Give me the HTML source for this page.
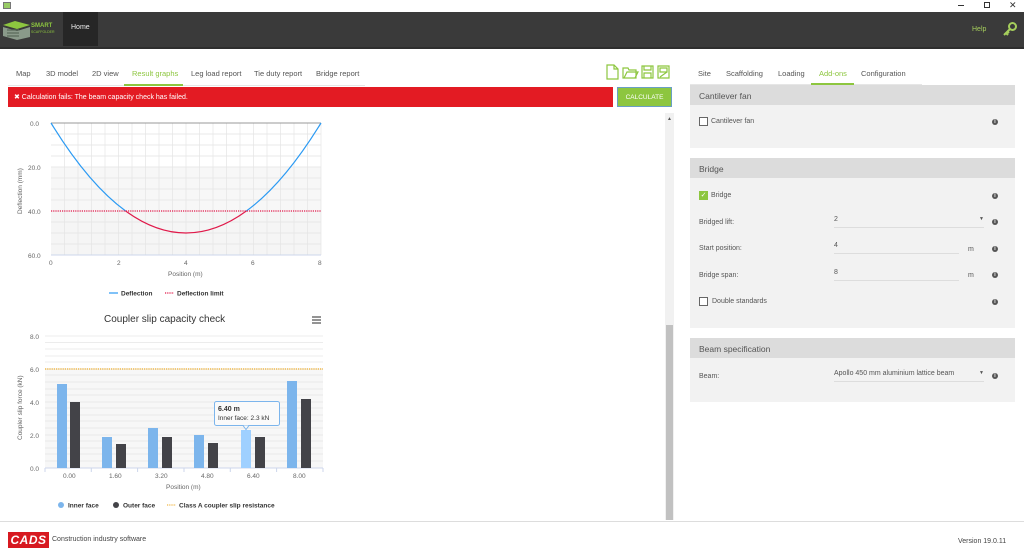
<!DOCTYPE html>
<html><head><meta charset="utf-8"><style>
*{margin:0;padding:0;box-sizing:border-box}
body{width:1024px;height:555px;position:relative;overflow:hidden;background:#fff;font-family:"Liberation Sans",sans-serif;font-size:8px;color:#555}
.a{position:absolute}
.tab{position:absolute;top:69px;font-size:7.5px;color:#555}
.ph{position:absolute;left:690px;width:325px;height:20px;background:#dcdcdc;font-size:8.5px;color:#555;padding:6px 0 0 9px}
.pb{position:absolute;left:690px;width:325px;background:#f2f2f2}
.lbl{position:absolute;font-size:7px;color:#555}
.info{position:absolute;width:6px;height:6px;border-radius:50%;background:#555;color:#fff;font-size:5px;font-weight:bold;line-height:6px;text-align:center}
.inp{position:absolute;border-bottom:1px solid #ddd;font-size:7px;color:#555;height:12px}
.cb{position:absolute;width:9px;height:9px;border:1px solid #666;background:#fff}
</style></head><body>
<div class="a" style="left:3px;top:2px;width:8px;height:7px;background:#9c6;border:1px solid #777"></div>
<div class="a" style="left:958px;top:5px;width:6px;height:1px;background:#333"></div>
<div class="a" style="left:984px;top:2px;width:6px;height:6px;border:1px solid #333"></div>
<div class="a" style="left:1009px;top:0px;font-size:9px;color:#333">✕</div>
<div class="a" style="left:0;top:12px;width:1024px;height:37px;background:#3a3a3a;border-bottom:2px solid #2e2e2e"></div>
<svg class="a" style="left:2px;top:18px" width="30" height="22" viewBox="0 0 30 22"><path d="M1 7 L13 3 L28 7 L15 11z" fill="#8dc63f"/><path d="M1 9 L15 13 L28 9 V19 L15 22 L1 18z" fill="#8a9a8a"/><path d="M5 12h12M5 15h12M5 18h12" stroke="#5a6a5a" stroke-width="1.2"/></svg>
<div class="a" style="left:31px;top:23px;font-size:6px;font-weight:bold;color:#8dc63f">SMART</div>
<div class="a" style="left:31px;top:30px;font-size:3.5px;color:#8dc63f">SCAFFOLDER</div>
<div class="a" style="left:63px;top:12px;width:35px;height:34px;background:#262626;color:#eee;font-size:7px;padding:12px 0 0 8px">Home</div>
<div class="a" style="left:972px;top:26px;font-size:7px;color:#a6cf5c">Help</div>
<svg class="a" style="left:1002px;top:21px" width="16" height="16" viewBox="0 0 16 16"><circle cx="10.5" cy="5.5" r="3.5" fill="none" stroke="#a6cf5c" stroke-width="2"/><path d="M8 8 L2 14 M4 12 L6 14 M5.5 10.5 L7 12" stroke="#a6cf5c" stroke-width="2"/></svg>

<div class="tab" style="left:16px">Map</div>
<div class="tab" style="left:46px">3D model</div>
<div class="tab" style="left:92px">2D view</div>
<div class="tab" style="left:132px;color:#8dc63f">Result graphs</div>
<div class="tab" style="left:191px">Leg load report</div>
<div class="tab" style="left:254px">Tie duty report</div>
<div class="tab" style="left:316px">Bridge report</div>
<div class="a" style="left:8px;top:85px;width:357px;height:1px;background:#e6e6e6"></div>
<div class="a" style="left:124px;top:84px;width:59px;height:2px;background:#8dc63f"></div>
<svg class="a" style="left:605px;top:64px" width="66" height="16" viewBox="0 0 66 16" fill="none" stroke="#8dc63f" stroke-width="1.2"><path d="M2 1h7l4 4v10H2z M9 1v4h4"/><path d="M18 4h5l1 2h7v8H18z M19 14l3-6h11l-3 6"/><path d="M37 2h11v12H37z M39 2v4h7V2 M39 9h7v5h-7z"/><path d="M53 2h11v12H53z M55 4h7v4h-7z M55 13l7-5"/></svg>
<div class="a" style="left:8px;top:87px;width:605px;height:20px;background:#e31b23;color:#fff;font-size:7px;padding:6px 0 0 6px">✖ Calculation fails: The beam capacity check has failed.</div>
<div class="a" style="left:617px;top:87px;width:55px;height:20px;background:#8dc63f;border:1px solid #6a9fc4;color:#fff;font-size:6.5px;text-align:center;padding-top:6px">CALCULATE</div>
<div class="a" style="left:665px;top:113px;width:9px;height:407px;background:#f1f1f1"></div>
<div class="a" style="left:666px;top:325px;width:7px;height:195px;background:#c1c1c1"></div>
<div class="a" style="left:667px;top:116px;font-size:5px;color:#555">▲</div>

<svg class="a" style="left:0;top:113px" width="340" height="195" viewBox="0 113 340 195" font-family="Liberation Sans" font-size="6.5" fill="#666">
<rect x="51" y="123" width="270" height="44" fill="#fff"/><rect x="51" y="167" width="270" height="44" fill="#f7f7f7"/><rect x="51" y="211" width="270" height="44" fill="#f5f5f5"/>
<g stroke="#e4e4e4" stroke-width="0.7">
<path d="M64.5 123V255M78 123V255M91.5 123V255M105 123V255M118.5 123V255M132 123V255M145.5 123V255M159 123V255M172.5 123V255M186 123V255M199.5 123V255M213 123V255M226.5 123V255M240 123V255M253.5 123V255M267 123V255M280.5 123V255M294 123V255M307.5 123V255M321 123V255"/>
<path d="M51 134H321M51 145H321M51 156H321M51 167H321M51 178H321M51 189H321M51 200H321M51 222H321M51 233H321M51 244H321"/>
</g>
<line x1="51" y1="123" x2="321" y2="123" stroke="#999"/><line x1="51" y1="255" x2="321" y2="255" stroke="#ccd6eb"/>
<defs><clipPath id="ca"><rect x="0" y="113" width="340" height="98"/></clipPath><clipPath id="cb"><rect x="0" y="211" width="340" height="60"/></clipPath></defs>
<path d="M51 123Q186 343 321 123" fill="none" stroke="#2b9af3" stroke-width="1.2" clip-path="url(#ca)"/>
<path d="M51 123Q186 343 321 123" fill="none" stroke="#e0194a" stroke-width="1.2" clip-path="url(#cb)"/>
<line x1="51" y1="211" x2="321" y2="211" stroke="#e0194a" stroke-width="1.2" stroke-dasharray="1.2 1"/>
<text x="30" y="126">0.0</text><text x="28" y="170">20.0</text><text x="28" y="214">40.0</text><text x="28" y="258">60.0</text>
<text x="49" y="265">0</text><text x="117" y="265">2</text><text x="184" y="265">4</text><text x="251" y="265">6</text><text x="318" y="265">8</text>
<text x="168" y="276">Position (m)</text>
<text transform="translate(22 214) rotate(-90)">Deflection (mm)</text>
<line x1="109" y1="293" x2="118" y2="293" stroke="#2b9af3" stroke-width="1.2"/><text x="121" y="295.5" font-weight="bold" fill="#333">Deflection</text>
<line x1="165" y1="293" x2="174" y2="293" stroke="#e0194a" stroke-width="1.2" stroke-dasharray="1.2 1"/><text x="177" y="295.5" font-weight="bold" fill="#333">Deflection limit</text>
</svg>

<svg class="a" style="left:0;top:308px" width="340" height="210" viewBox="0 308 340 210" font-family="Liberation Sans" font-size="6.5" fill="#666">
<text x="104" y="322" font-size="10" fill="#333">Coupler slip capacity check</text>
<path d="M312 317h9M312 320h9M312 323h9" stroke="#555" stroke-width="1.3"/>
<rect x="45" y="369" width="278" height="99" fill="#f7f7f7"/>
<g stroke="#e6e6e6" stroke-width="0.7"><path d="M45 336H323M45 342.6H323M45 349H323M45 356H323M45 362H323M45 369H323M45 375H323M45 382H323M45 389H323M45 395H323M45 402H323M45 408H323M45 415H323M45 421H323M45 428H323M45 435H323M45 441H323M45 448H323M45 454H323M45 461H323"/></g>
<line x1="45" y1="369" x2="323" y2="369" stroke="#f0b848" stroke-width="1.5" stroke-dasharray="1.2 1"/>
<line x1="45" y1="468" x2="323" y2="468" stroke="#ccd6eb"/>
<path d="M45 468v4M91.3 468v4M137.6 468v4M184 468v4M230.3 468v4M276.6 468v4M323 468v4" stroke="#ccd6eb"/>
<g fill="#7cb5ec"><rect x="57" y="384" width="10" height="84"/><rect x="102" y="437" width="10" height="31"/><rect x="148" y="428" width="10" height="40"/><rect x="194" y="435" width="10" height="33"/><rect x="287" y="381" width="10" height="87"/></g>
<rect x="241" y="430" width="10" height="38" fill="#9fd0ff"/>
<g fill="#434348"><rect x="70" y="402" width="10" height="66"/><rect x="116" y="444" width="10" height="24"/><rect x="162" y="437" width="10" height="31"/><rect x="208" y="443" width="10" height="25"/><rect x="255" y="437" width="10" height="31"/><rect x="301" y="399" width="10" height="69"/></g>
<rect x="214.5" y="401.5" width="65" height="24" fill="#fafafa" stroke="#7cb5ec" rx="2"/>
<path d="M243 425.5l3 4 3-4" fill="#fafafa" stroke="#7cb5ec"/>
<text x="218" y="411" font-weight="bold" fill="#333" font-size="7">6.40 m</text><text x="218" y="420" fill="#333" font-size="6.5">Inner face: 2.3 kN</text>
<text x="30" y="339">8.0</text><text x="30" y="372">6.0</text><text x="30" y="405">4.0</text><text x="30" y="438">2.0</text><text x="30" y="471">0.0</text>
<text x="63" y="478">0.00</text><text x="109" y="478">1.60</text><text x="155" y="478">3.20</text><text x="201" y="478">4.80</text><text x="247" y="478">6.40</text><text x="293" y="478">8.00</text>
<text x="166" y="489">Position (m)</text>
<text transform="translate(22 440) rotate(-90)">Coupler slip force (kN)</text>
<circle cx="61" cy="505" r="3" fill="#7cb5ec"/><text x="68" y="507.5" font-weight="bold" fill="#333">Inner face</text>
<circle cx="116" cy="505" r="3" fill="#434348"/><text x="123" y="507.5" font-weight="bold" fill="#333">Outer face</text>
<line x1="167" y1="505" x2="176" y2="505" stroke="#f0b848" stroke-width="1.2" stroke-dasharray="1.2 1"/><text x="179" y="507.5" font-weight="bold" fill="#333">Class A coupler slip resistance</text>
</svg>

<div class="a" style="left:0;top:521px;width:1024px;height:1px;background:#ddd"></div>
<div class="a" style="left:8px;top:532px;width:41px;height:16px;background:#d71920;color:#fff;font-weight:bold;font-style:italic;font-size:12px;text-align:center;line-height:16px;letter-spacing:0.5px">CADS</div>
<div class="a" style="left:52px;top:536px;font-size:7px;color:#444">Construction industry software</div>
<div class="a" style="left:958px;top:538px;font-size:7px;color:#444">Version 19.0.11</div>

<div class="tab" style="left:698px">Site</div>
<div class="tab" style="left:726px">Scaffolding</div>
<div class="tab" style="left:778px">Loading</div>
<div class="tab" style="left:819px;color:#8dc63f">Add-ons</div>
<div class="tab" style="left:861px">Configuration</div>
<div class="a" style="left:690px;top:84px;width:232px;height:1px;background:#e6e6e6"></div>
<div class="a" style="left:811px;top:83px;width:43px;height:2px;background:#8dc63f"></div>

<div class="ph" style="top:85px">Cantilever fan</div>
<div class="pb" style="top:105px;height:43px"></div>
<div class="cb" style="left:699px;top:117px"></div><div class="lbl" style="left:711px;top:118px">Cantilever fan</div>
<div class="info" style="left:992px;top:119px">i</div>

<div class="ph" style="top:158px">Bridge</div>
<div class="pb" style="top:178px;height:150px"></div>
<div class="cb" style="left:699px;top:191px;background:#8dc63f;border-color:#8dc63f;color:#fff;font-size:7px;line-height:7px;text-align:center">✓</div><div class="lbl" style="left:711px;top:192px">Bridge</div>
<div class="info" style="left:992px;top:193px">i</div>
<div class="lbl" style="left:699px;top:219px">Bridged lift:</div>
<div class="inp" style="left:834px;top:216px;width:150px">2<span style="float:right;font-size:5px">▼</span></div>
<div class="info" style="left:992px;top:219px">i</div>
<div class="lbl" style="left:699px;top:245px">Start position:</div>
<div class="inp" style="left:834px;top:242px;width:125px">4</div><div class="lbl" style="left:968px;top:246px">m</div>
<div class="info" style="left:992px;top:246px">i</div>
<div class="lbl" style="left:699px;top:272px">Bridge span:</div>
<div class="inp" style="left:834px;top:269px;width:125px">8</div><div class="lbl" style="left:968px;top:272px">m</div>
<div class="info" style="left:992px;top:272px">i</div>
<div class="cb" style="left:699px;top:297px"></div><div class="lbl" style="left:712px;top:298px">Double standards</div>
<div class="info" style="left:992px;top:299px">i</div>

<div class="ph" style="top:338px">Beam specification</div>
<div class="pb" style="top:358px;height:44px"></div>
<div class="lbl" style="left:699px;top:373px">Beam:</div>
<div class="inp" style="left:834px;top:370px;width:150px">Apollo 450 mm aluminium lattice beam<span style="float:right;font-size:5px">▼</span></div>
<div class="info" style="left:992px;top:373px">i</div>
</body></html>
